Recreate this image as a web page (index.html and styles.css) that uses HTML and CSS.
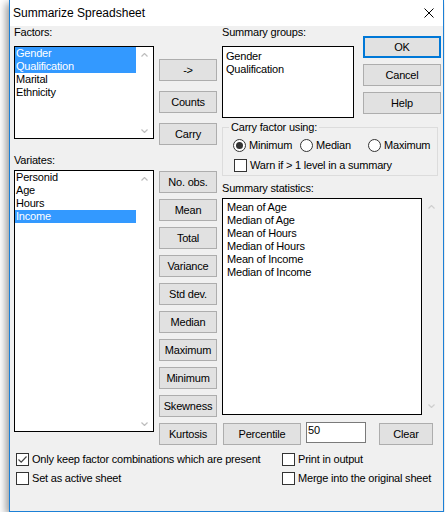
FILE: index.html
```html
<!DOCTYPE html>
<html>
<head>
<meta charset="utf-8">
<title>Summarize Spreadsheet</title>
<link rel="stylesheet" href="styles.css">
</head>
<body>
<div class="window">
  <div class="titlebar">
    <span class="title">Summarize Spreadsheet</span>
    <svg class="close" width="10" height="10" viewBox="0 0 10 10"><path d="M0.5 0.5 L9.5 9.5 M9.5 0.5 L0.5 9.5" stroke="#000" stroke-width="1" fill="none"/></svg>
  </div>
  <div class="client">
    <div class="main">
      <div class="col-left">
        <div class="label">Factors:</div>
        <div class="listbox factors">
          <div class="items">
            <div class="item sel">Gender</div>
            <div class="item sel">Qualification</div>
            <div class="item">Marital</div>
            <div class="item">Ethnicity</div>
          </div>
          <div class="vscroll">
            <svg class="chev" width="7" height="4" viewBox="0 0 7 4"><polyline points="0.5,3.5 3.5,0.5 6.5,3.5"/></svg>
            <svg class="chev" width="7" height="4" viewBox="0 0 7 4"><polyline points="0.5,0.5 3.5,3.5 6.5,0.5"/></svg>
          </div>
        </div>
        <div class="label variates-label">Variates:</div>
        <div class="listbox variates">
          <div class="items">
            <div class="item">Personid</div>
            <div class="item">Age</div>
            <div class="item">Hours</div>
            <div class="item sel">Income</div>
          </div>
          <div class="vscroll">
            <svg class="chev" width="7" height="4" viewBox="0 0 7 4"><polyline points="0.5,3.5 3.5,0.5 6.5,3.5"/></svg>
            <svg class="chev" width="7" height="4" viewBox="0 0 7 4"><polyline points="0.5,0.5 3.5,3.5 6.5,0.5"/></svg>
          </div>
        </div>
      </div>
      <div class="col-mid">
        <button class="btn b-arrow">-&gt;</button>
        <button class="btn b-gap10">Counts</button>
        <button class="btn b-gap10">Carry</button>
        <button class="btn b-first-stat">No. obs.</button>
        <button class="btn b-stat">Mean</button>
        <button class="btn b-stat">Total</button>
        <button class="btn b-stat">Variance</button>
        <button class="btn b-stat">Std dev.</button>
        <button class="btn b-stat">Median</button>
        <button class="btn b-stat">Maximum</button>
        <button class="btn b-stat">Minimum</button>
        <button class="btn b-stat">Skewness</button>
        <button class="btn b-stat">Kurtosis</button>
      </div>
      <div class="col-right">
        <div class="top-row">
          <div class="groups">
            <div class="label">Summary groups:</div>
            <div class="box groups-box">
              <div class="line">Gender</div>
              <div class="line">Qualification</div>
            </div>
          </div>
          <div class="dlg-buttons">
            <button class="btn btn-ok">OK</button>
            <button class="btn">Cancel</button>
            <button class="btn">Help</button>
          </div>
        </div>
        <fieldset class="carry">
          <legend>Carry factor using:</legend>
          <div class="radios">
            <label class="opt"><span class="radio on"></span>Minimum</label>
            <label class="opt"><span class="radio"></span>Median</label>
            <label class="opt"><span class="radio"></span>Maximum</label>
          </div>
          <label class="opt warn"><span class="check"></span>Warn if &gt; 1 level in a summary</label>
        </fieldset>
        <div class="label stats-label">Summary statistics:</div>
        <div class="stats-row">
          <div class="box stats-box">
            <div class="line">Mean of Age</div>
            <div class="line">Median of Age</div>
            <div class="line">Mean of Hours</div>
            <div class="line">Median of Hours</div>
            <div class="line">Mean of Income</div>
            <div class="line">Median of Income</div>
          </div>
          <div class="vscroll outside">
            <svg class="chev light" width="7" height="4" viewBox="0 0 7 4"><polyline points="0.5,3.5 3.5,0.5 6.5,3.5"/></svg>
            <svg class="chev light" width="7" height="4" viewBox="0 0 7 4"><polyline points="0.5,0.5 3.5,3.5 6.5,0.5"/></svg>
          </div>
        </div>
        <div class="bottom-row">
          <button class="btn percentile">Percentile</button>
          <div class="input">50</div>
          <button class="btn clear">Clear</button>
        </div>
      </div>
    </div>
    <div class="options">
      <label class="opt"><span class="check"><svg width="11" height="11" viewBox="0 0 11 11"><path d="M1.5 5.5 L4.2 8.2 L9.5 2.5" stroke="#444" stroke-width="1.2" fill="none"/></svg></span>Only keep factor combinations which are present</label>
      <label class="opt"><span class="check"></span>Print in output</label>
      <label class="opt"><span class="check"></span>Set as active sheet</label>
      <label class="opt"><span class="check"></span>Merge into the original sheet</label>
    </div>
  </div>
</div>
</body>
</html>
```
FILE: styles.css
```css
* { box-sizing: border-box; }
html, body { margin: 0; padding: 0; background: #fff; }
body {
  font-family: "Liberation Sans", Arial, sans-serif;
  font-size: 11px;
  line-height: 13px;
  color: #000;
  letter-spacing: -0.2px;
}
.window {
  margin-left: 9px;
  width: 435px;
  height: 512px;
  border: 1px solid #1c80d6;
  border-top: 0;
  display: flex;
  flex-direction: column;
  background: #f0f0f0;
  box-shadow: -3px 3px 8px rgba(0, 0, 0, 0.4);
}
.titlebar {
  height: 26px;
  flex: none;
  background: #fff;
  display: flex;
  align-items: center;
  justify-content: space-between;
  padding-left: 3px;
  padding-right: 9px;
}
.title { font-size: 12px; letter-spacing: 0; line-height: 26px; }
.close { display: block; }
.client { flex: 1; display: flex; flex-direction: column; }
.main { display: flex; padding-left: 4px; height: 419px; flex: none; }
.col-left { width: 140px; display: flex; flex-direction: column; }
.col-mid { width: 58px; margin-left: 5px; display: flex; flex-direction: column; }
.col-right { width: 219px; margin-left: 5px; display: flex; flex-direction: column; }
.label { height: 13px; white-space: nowrap; }

.listbox { display: flex; border: 1px solid #000; background: #fff; flex: none; }
.factors { margin-top: 7px; height: 93px; }
.variates-label { margin-top: 15px; }
.variates { margin-top: 3px; height: 262px; }
.items { flex: 1; }
.item { height: 13px; padding-left: 1px; white-space: nowrap; }
.item.sel { background: #3399ff; color: #fff; }
.vscroll {
  width: 17px;
  flex: none;
  display: flex;
  flex-direction: column;
  justify-content: space-between;
  align-items: center;
  padding: 6px 0 5px;
}
.chev { display: block; }
.chev polyline { fill: none; stroke: #bdbdbd; stroke-width: 1.2; }
.chev.light polyline { stroke: #cfcfcf; }

.btn {
  display: block;
  width: 58px;
  height: 22px;
  padding: 0;
  margin: 0;
  background: #e1e1e1;
  border: 1px solid #adadad;
  font-family: inherit;
  font-size: 11px;
  letter-spacing: -0.2px;
  color: #000;
  line-height: 13px;
  flex: none;
}
.b-arrow { margin-top: 33px; }
.b-gap10 { margin-top: 10px; }
.b-first-stat { margin-top: 26px; }
.b-stat { margin-top: 6px; }

.top-row { display: flex; height: 92px; flex: none; }
.groups { width: 132px; }
.box { border: 1px solid #000; background: #fff; }
.line { height: 13px; white-space: nowrap; }
.groups-box { margin-top: 7px; height: 72px; padding: 3px 3px; }
.dlg-buttons {
  margin-left: 9px;
  width: 78px;
  padding-top: 10px;
  display: flex;
  flex-direction: column;
  gap: 6px;
}
.dlg-buttons .btn { width: 78px; }
.btn-ok { border: 2px solid #0078d7; }

.carry {
  margin: 3px 0 0;
  width: 216px;
  min-width: 0;
  border: 1px solid #dcdcdc;
  padding: 5px 0 3px 10px;
}
.carry legend { padding: 0 2px; margin-left: -4px; line-height: 13px; }
.radios { display: grid; grid-template-columns: 67px 68px auto; height: 13px; }
.opt { display: flex; align-items: center; gap: 3px; white-space: nowrap; height: 13px; }
.radio {
  width: 13px;
  height: 13px;
  flex: none;
  border: 1px solid #333;
  border-radius: 50%;
  background: #fff;
  display: flex;
  align-items: center;
  justify-content: center;
}
.radio.on::after {
  content: "";
  width: 7px;
  height: 7px;
  border-radius: 50%;
  background: #333;
}
.check {
  width: 13px;
  height: 13px;
  flex: none;
  border: 1px solid #333;
  background: #fff;
  display: flex;
  align-items: center;
  justify-content: center;
}
.check svg { display: block; }
.warn { margin-top: 7px; margin-left: 1px; }

.stats-label { margin-top: 6px; }
.stats-row { display: flex; margin-top: 3px; height: 217px; flex: none; }
.stats-box { width: 200px; padding: 2px 4px; }
.vscroll.outside { width: 19px; padding: 7px 0; }

.bottom-row { display: flex; align-items: flex-start; margin-top: 8px; }
.percentile { width: 78px; margin-left: 1px; }
.input {
  width: 60px;
  height: 21px;
  margin-left: 5px;
  margin-top: -1px;
  border: 1px solid #7a7a7a;
  background: #fff;
  padding: 1px 1px;
}
.clear { width: 54px; margin-left: 13px; }

.options {
  margin-top: 8px;
  padding-left: 6px;
  display: grid;
  grid-template-columns: 266px auto;
  row-gap: 6px;
}
```
